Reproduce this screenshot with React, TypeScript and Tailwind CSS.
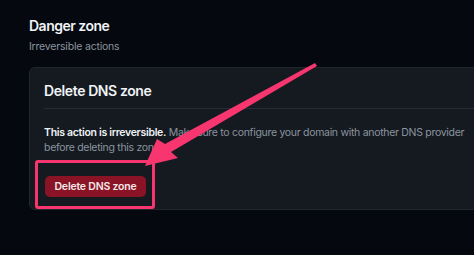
const Arrow = () => (
  <svg
    className="absolute left-0 top-0 pointer-events-none"
    width="474"
    height="255"
    viewBox="0 0 474 255"
  >
    <polygon
      points="145,166 157,139 165,144 315,63 317,66 171,152 178,158"
      fill="#f7366f"
      strokeLinejoin="round"
    />
  </svg>
);

export default function App() {
  return (
    <div
      className="relative w-[474px] h-[255px] overflow-hidden bg-[#05080f] pt-[16px] pl-[29px] text-white"
      style={{ fontFamily: "Inter, 'Noto Sans', sans-serif" }}
    >
      {/* header */}
      <h2 className="text-[14px] leading-[20px] font-semibold tracking-[-0.5px] text-[#f0f3f6]">
        Danger zone
      </h2>
      <p className="mt-[3px] text-[10.5px] leading-[16px] tracking-[-0.2px] text-[#8b949e]">
        Irreversible actions
      </p>

      {/* card */}
      <div className="mt-[12px] -mr-[30px] h-[143px] rounded-[6px] border border-[#21262d] bg-[#151a21] pl-[14px]">
        <div className="pt-[13px] pb-[7px] border-b border-[#262c35]">
          <h3 className="text-[14px] leading-[20px] font-semibold tracking-[-0.4px] text-[#f0f3f6]">
            Delete DNS zone
          </h3>
        </div>

        <p className="mt-[16px] whitespace-nowrap text-[10.5px] leading-[15px] tracking-[-0.3px] text-[#8b949e]">
          <span className="font-semibold text-[#f0f3f6]">
            This action is irreversible.
          </span>{" "}
          Make sure to configure your domain with another DNS provider
          <br />
          before deleting this zone.
        </p>

        <div className="mt-[5px] -ml-[9px] w-fit rounded-[3px] border-[3px] border-[#f7366f] pl-[7px] pr-[6px] py-[9px]">
          <button className="h-[21px] w-[101px] rounded-[5px] bg-[#8a1426] text-[10.5px] font-semibold tracking-[-0.2px] text-[#f3e6e8]">
            Delete DNS zone
          </button>
        </div>
      </div>

      <Arrow />
    </div>
  );
}
